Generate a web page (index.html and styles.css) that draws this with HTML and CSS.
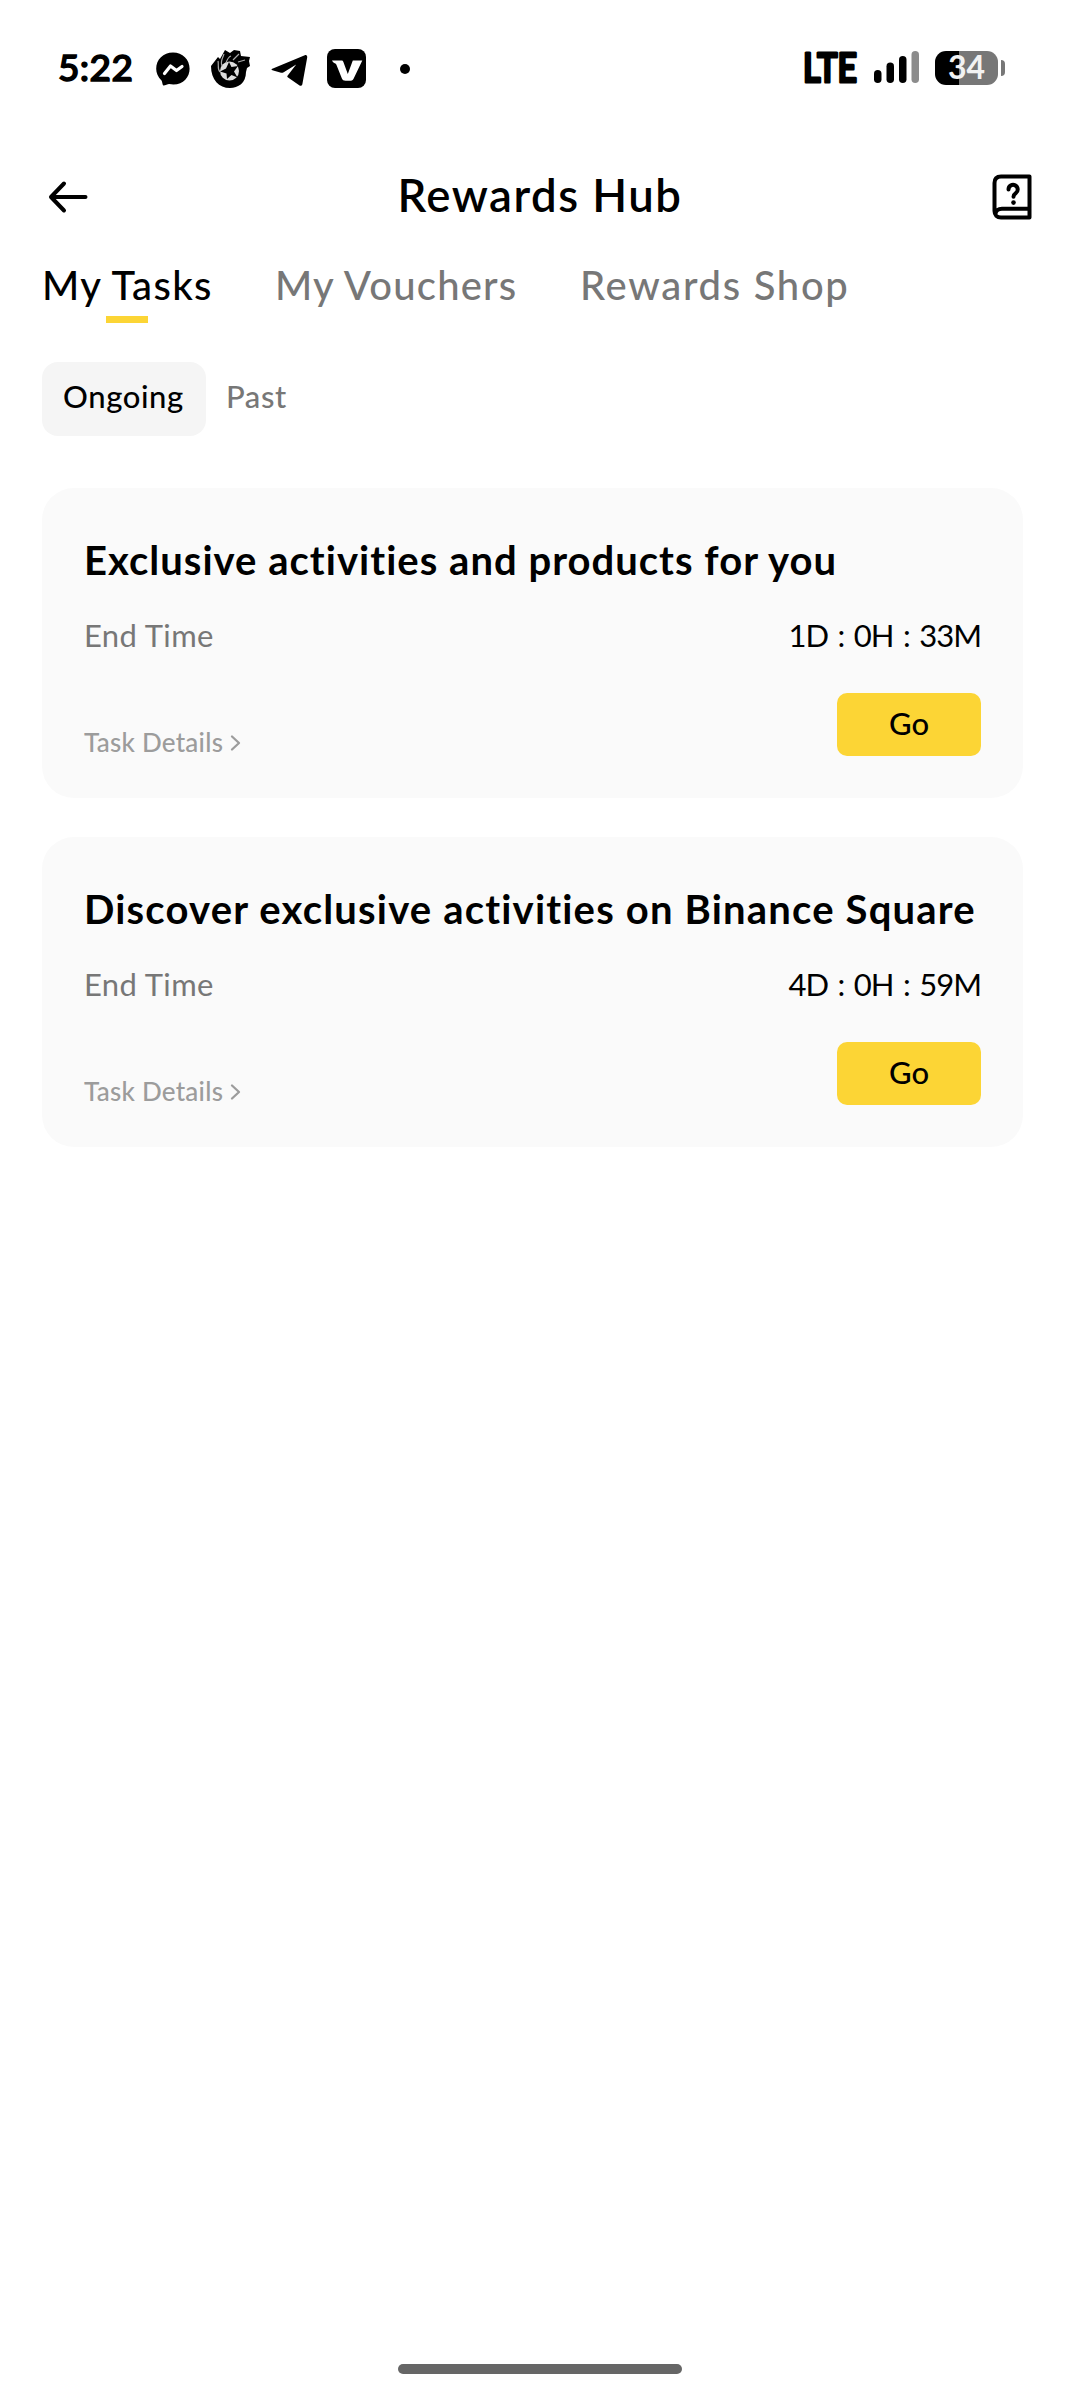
FILE: index.html
```html
<!DOCTYPE html>
<html lang="en">
<head>
<meta charset="utf-8">
<title>Rewards Hub</title>
<link rel="stylesheet" href="styles.css">
</head>
<body>
<div class="status">
  <span class="clock">5:22</span>
  <svg class="notifications" width="260" height="50" viewBox="150 44 260 50">
    <path d="M173 52.500c-9.800 0-16.800 7-16.800 16.300 0 4 1.600 8.200 5.300 11.800 .9.900.8 4.800 2 5 1.300.2 4.500-1.600 5.600-1.500 12.700 2.400 20.500-6 20.500-15.300 0-9.300-7-16.300-16.600-16.300z"/>
    <path d="M164.500 73.500l6-7.500 6 4.500 5.500-4" fill="none" stroke="#fff" stroke-width="3.200" stroke-linecap="round" stroke-linejoin="round"/>
    <path d="M211 66l7-9 2 2 5-9 5 3 4-3 6 1 1 5 9 1-1 4 1 5-3 2-1 4c0 11-8 16-16 16-11 0-19-8-19-22z"/>
    <circle cx="229.500" cy="71" r="9.500" fill="#ddd"/>
    <path d="M229 62l2.500 5 6.500-1-4 5.500 3.500 6-6-2.500-4.500 4-.5-5.500-6.500-2 6-3z"/>
    <path d="M218 61c1 4-1 8 2 11M224 54c-2 6-4 8-2 12M231 56c-3 1-4 4-5 7M233 60l6-6M238 62l7-2" fill="none" stroke="#aaa" stroke-width="1.200"/>
    <path d="M272.300 68.800l32.500-13.500c1.500-.6 2.700.3 2.400 2.200l-4.800 26.500c-.3 1.800-1.800 2.200-3.200 1.200l-11.500-8c-.6-.4-.6-1 0-1.600l8.500-11-12.500 7.600c-1.200.7-2.200.8-3.500.3l-7.800-2.300c-1.200-.4-1.200-.9-.1-1.400z"/>
    <rect x="327" y="49" width="39" height="39" rx="8"/>
    <path d="M332 60.500h9.500c1 0 1.400.3 1.800 1.200l4.500 12.300 5-13.500h9.500l-8.600 18c-1 2-2.200 2.300-4.500 2.300h-3.600c-2 0-3-.4-3.700-2.200l-5.600-14.100c-.8-1.500-3.400-1.500-4.300-4z" fill="#fff"/>
    <circle cx="405" cy="69" r="5"/>
  </svg>
  <div class="system">
    <svg class="network" width="62" height="44" viewBox="-4 -2 62 44"><text x="-1" y="35" textLength="54" lengthAdjust="spacingAndGlyphs">LTE</text></svg>
    <svg width="46" height="34" viewBox="0 0 46 34">
      <rect x="0" y="20" width="7.500" height="13" rx="3.750"/>
      <rect x="12.500" y="12.500" width="7.500" height="20.500" rx="3.750"/>
      <rect x="25" y="6" width="7.500" height="27" rx="3.750"/>
      <rect x="37.500" y="1" width="7.500" height="32" rx="3.750" fill="#8c8c8c"/>
    </svg>
    <div class="battery"><span>34</span></div>
    <i class="battery-tip"></i>
  </div>
</div>

<header class="header">
  <svg width="42" height="36" viewBox="0 0 42 36"><path d="M17 4.500L4 18l13 13.500M4.500 18H38.500" fill="none" stroke="#000" stroke-width="4" stroke-linecap="round" stroke-linejoin="round"/></svg>
  <h1>Rewards Hub</h1>
  <svg width="42" height="46" viewBox="0 0 42 46" fill="none" stroke="#000" stroke-width="4" stroke-linecap="round" stroke-linejoin="round">
    <path d="M38.500 2.500H10c-4.500 0-6.500 2.500-6.500 6.500v28c0 4 2.500 6.500 6.500 6.500h28.500zM38.500 34.700H11c-4 0-6 2-6.500 5"/>
    <path d="M17.500 15.500a4.600 4.600 0 1 1 7.300 3.700c-1.800 1.300-2.300 2-2.300 3.600"/>
    <circle cx="22.500" cy="28.600" r="2.300" fill="#000" stroke="none"/>
  </svg>
</header>

<nav class="tabs">
  <a class="tab tab-active">My Tasks</a>
  <a class="tab tab-vouchers">My Vouchers</a>
  <a class="tab tab-shop">Rewards Shop</a>
</nav>

<div class="filters">
  <a class="filter filter-active">Ongoing</a>
  <a class="filter">Past</a>
</div>

<main class="cards">
  <section class="card">
    <h2>Exclusive activities and products for you</h2>
    <div class="end-time"><span class="label">End Time</span><span class="time">1D : 0H : 33M</span></div>
    <div class="actions">
      <a class="details">Task Details <svg width="12" height="18" viewBox="0 0 12 18"><path d="M2 2.500L9 9 2 15.500"/></svg></a>
      <button class="go">Go</button>
    </div>
  </section>
  <section class="card">
    <h2 class="wide">Discover exclusive activities on Binance Square</h2>
    <div class="end-time"><span class="label">End Time</span><span class="time">4D : 0H : 59M</span></div>
    <div class="actions">
      <a class="details">Task Details <svg width="12" height="18" viewBox="0 0 12 18"><path d="M2 2.500L9 9 2 15.500"/></svg></a>
      <button class="go">Go</button>
    </div>
  </section>
</main>
<div class="home-bar"></div>
</body>
</html>
```
FILE: styles.css
```css
* { box-sizing: border-box; }
body {
  margin: 0;
  height: 2400px;
  display: flex;
  flex-direction: column;
  background: #fff;
  color: #000;
  font-family: Lato, "Liberation Sans", sans-serif;
}
h1, h2 { margin: 0; white-space: nowrap; }

.status { height: 134px; padding: 0 75px 0 58px; display: flex; align-items: center; }
.clock {
  width: 92px;
  font-size: 37px;
  font-weight: 500;
  line-height: 50px;
  letter-spacing: .4px;
  padding-bottom: 1px;
  -webkit-text-stroke: 1.500px #000;
  stroke-linejoin: round;
}
.notifications { margin-top: 4px; }
.system { margin-left: auto; display: flex; align-items: center; }
.network { margin-right: 12px; overflow: visible; }
.network text {
  font-size: 41px;
  font-weight: 600;
  stroke: #000;
  stroke-width: 3px;
  stroke-linejoin: round;
}
.battery {
  width: 63px;
  height: 34px;
  margin: 2px 3px 0 15px;
  border-radius: 11px;
  background: linear-gradient(90deg, #000 24px, #777 24px);
  color: #f2f2f2;
  font-size: 32px;
  font-weight: 700;
  line-height: 32px;
  text-align: center;
}
.battery-tip { width: 4px; height: 16px; margin-top: 2px; border-radius: 0 4px 4px 0; background: #777; }

.header { height: 125px; padding: 0 47px; display: flex; align-items: center; justify-content: space-between; }
.header h1 { padding-bottom: 3px; font-size: 45.500px; font-weight: 600; line-height: 54px; letter-spacing: 1.500px; }

.tabs { height: 64px; padding-left: 42px; display: flex; gap: 63px; }
.tab { position: relative; font-size: 40px; font-weight: 500; line-height: 52px; white-space: nowrap; color: #777; }
.tab-active { width: 170px; color: #000; letter-spacing: 1.350px; }
.tab-active::after {
  content: "";
  position: absolute;
  left: 64px;
  bottom: 0;
  width: 42px;
  height: 7px;
  background: #fcd535;
}
.tab-vouchers { width: 242px; letter-spacing: 1.200px; }
.tab-shop { letter-spacing: 1.700px; }

.filters { margin: 39px 0 52px 42px; display: flex; height: 74px; }
.filter { padding: 0 20px 5px; font-size: 31px; font-weight: 500; line-height: 69px; letter-spacing: .6px; color: #777; }
.filter-active { width: 164px; padding-left: 21px; border-radius: 16px; background: #f5f5f5; color: #000; }

.cards { margin: 0 57px 0 42px; display: flex; flex-direction: column; gap: 39px; }
.card { height: 310px; padding: 47px 42px 0; border-radius: 32px; background: #fafafa; }
.card h2 { font-size: 40px; font-weight: 700; line-height: 50px; letter-spacing: 1.020px; }
.card .wide { letter-spacing: 1.180px; }
.end-time { margin-top: 30px; display: flex; justify-content: space-between; font-size: 31px; line-height: 40px; }
.label { color: #777; letter-spacing: .4px; }
.time { letter-spacing: -1px; word-spacing: 2.600px; }
.actions { margin-top: 38px; display: flex; justify-content: space-between; align-items: flex-end; }
.details { display: flex; align-items: center; gap: 7px; font-size: 26px; font-weight: 500; line-height: 28px; letter-spacing: .25px; color: #9c9c9c; }
.details svg { margin-top: 2px; fill: none; stroke: #9c9c9c; stroke-width: 2.300px; stroke-linecap: round; stroke-linejoin: round; }
.go {
  width: 144px;
  height: 63px;
  padding: 0 0 4px;
  border: 0;
  border-radius: 10px;
  background: #fcd535;
  color: #000;
  font: 500 31px Lato, "Liberation Sans", sans-serif;
}

.home-bar { width: 284px; height: 10px; margin: auto auto 26px; border-radius: 5px; background: #666; }
```
